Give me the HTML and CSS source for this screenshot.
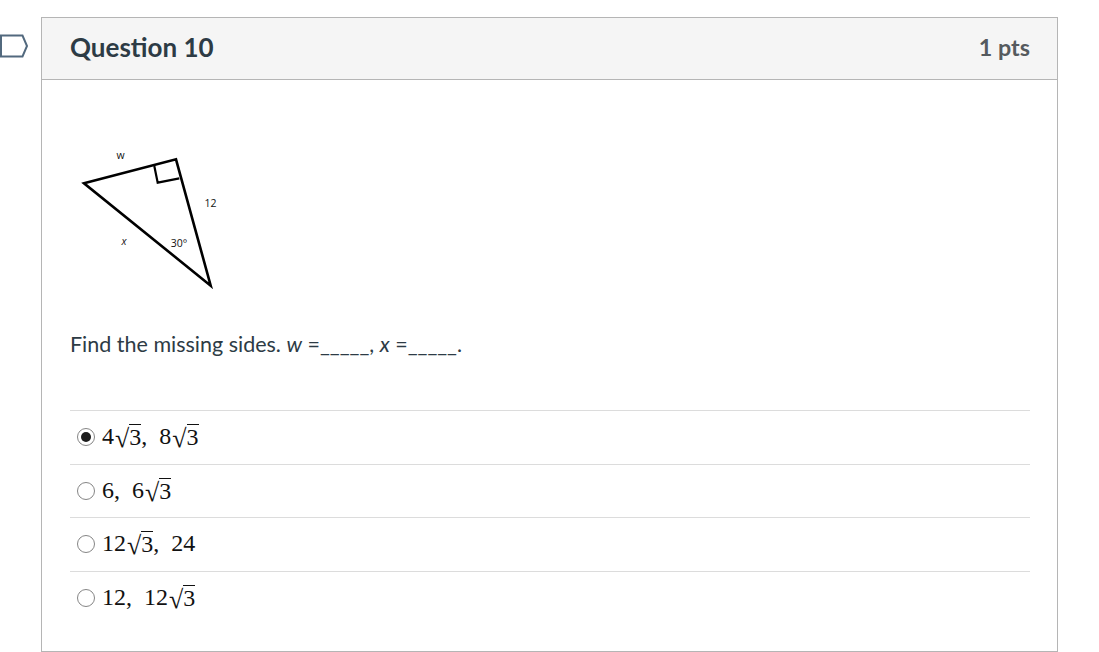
FILE: index.html
```html
<!DOCTYPE html>
<html lang="en">
<head>
<meta charset="utf-8">
<title>Question 10</title>
<link rel="stylesheet" href="styles.css">
</head>
<body>
<div class="page">
  <div class="flag-col">
    <svg class="flag" width="30" height="26" viewBox="0 0 30 26" aria-hidden="true">
      <path d="M1 1.5 H22.5 L27 12 L22.5 22.5 H1 Z" fill="none" stroke="#52697e" stroke-width="2" stroke-linejoin="miter"/>
    </svg>
  </div>
  <div class="card">
    <div class="card-header">
      <h2 class="title">Question 10</h2>
      <div class="pts">1 pts</div>
    </div>
    <div class="card-body">
      <div class="figure">
        <svg width="160" height="160" viewBox="0 0 160 160" aria-hidden="true">
          <path d="M14 43.3 L106 19.3 L140.7 145.7 Z" fill="none" stroke="#000" stroke-width="2.6" stroke-linejoin="miter"/>
          <path d="M84.3 26 L87.7 42.7 L109.3 38.3" fill="none" stroke="#000" stroke-width="2.2"/>
          <text x="50.5" y="18.5" class="lbl" text-anchor="middle">w</text>
          <text x="140.5" y="66.5" class="lbl" text-anchor="middle">12</text>
          <text x="54" y="105" class="lbl it" text-anchor="middle">x</text>
          <text x="109" y="106.5" class="lbl" text-anchor="middle">30°</text>
        </svg>
      </div>
      <p class="prompt">Find the missing sides. <em>w</em> =_____, <em>x</em> =_____.</p>
      <div class="answers">
        <label class="answer">
          <span class="radio checked"></span>
          <span class="math">4<span class="sqrt"><span class="rad">√</span><span class="rc">3</span></span>,&ensp;8<span class="sqrt"><span class="rad">√</span><span class="rc">3</span></span></span>
        </label>
        <label class="answer">
          <span class="radio"></span>
          <span class="math">6,&ensp;6<span class="sqrt"><span class="rad">√</span><span class="rc">3</span></span></span>
        </label>
        <label class="answer">
          <span class="radio"></span>
          <span class="math">12<span class="sqrt"><span class="rad">√</span><span class="rc">3</span></span>,&ensp;24</span>
        </label>
        <label class="answer last">
          <span class="radio"></span>
          <span class="math">12,&ensp;12<span class="sqrt"><span class="rad">√</span><span class="rc">3</span></span></span>
        </label>
      </div>
    </div>
  </div>
</div>
</body>
</html>
```
FILE: styles.css
```css
* { box-sizing: border-box; }
html, body { margin: 0; padding: 0; background: #fff; }
body { font-family: Lato, "Open Sans", sans-serif; color: #2d3b45; }

.page {
  display: flex;
  align-items: flex-start;
  padding-top: 17px;
  width: 1099px;
  height: 652px;
  overflow: hidden;
}
.flag-col {
  width: 41px;
  flex: none;
  padding-top: 17px;
}
.flag { display: block; }

.card {
  width: 1017px;
  flex: none;
  border: 1px solid #b5b5b5;
  min-height: 635px;
}
.card-header {
  height: 62px;
  background: #f5f5f5;
  border-bottom: 1px solid #b5b5b5;
  display: flex;
  align-items: center;
  justify-content: space-between;
  padding: 0 27px 3px 28px;
}
.title {
  margin: 0;
  font-size: 26px;
  font-weight: 700;
  color: #2d3b45;
}
.pts {
  font-size: 23.3px;
  font-weight: 700;
  color: #555a5e;
}

.card-body { padding: 0 27px 0 28px; }
.figure { padding-top: 60px; height: 220px; }
.figure svg { display: block; }
.lbl { font-family: "Open Sans", "DejaVu Sans", sans-serif; font-size: 10.5px; fill: #111; }
.lbl.it { font-style: italic; }

.prompt {
  margin: 32px 0 0;
  font-size: 21.5px;
  line-height: 24px;
  color: #2d3b45;
}
.answers { margin-top: 54px; }
.answer {
  display: flex;
  align-items: center;
  gap: 7px;
  height: 53.5px;
  border-top: 1px solid #dcdcdc;
  padding-left: 7px;
  padding-bottom: 2px;
}
.answer.last { height: 53px; }
.radio {
  width: 18px;
  height: 18px;
  border: 1.3px solid #858585;
  border-radius: 50%;
  flex: none;
  display: flex;
  align-items: center;
  justify-content: center;
  background: #fff;
  margin-top: 2px;
}
.radio.checked::after {
  content: "";
  width: 10px;
  height: 10px;
  border-radius: 50%;
  background: #1b1b1b;
}
.math {
  font-family: "Liberation Serif", "DejaVu Serif", serif;
  font-size: 24px;
  color: #111;
  white-space: nowrap;
  line-height: 1;
}
.sqrt { display: inline-flex; align-items: flex-end; }
.rad { font-size: 26px; margin-left: 1px; line-height: 1; transform: translateY(3px); }
.rc { border-top: 1.4px solid #111; padding-top: 1px; line-height: 0.95; }
```
